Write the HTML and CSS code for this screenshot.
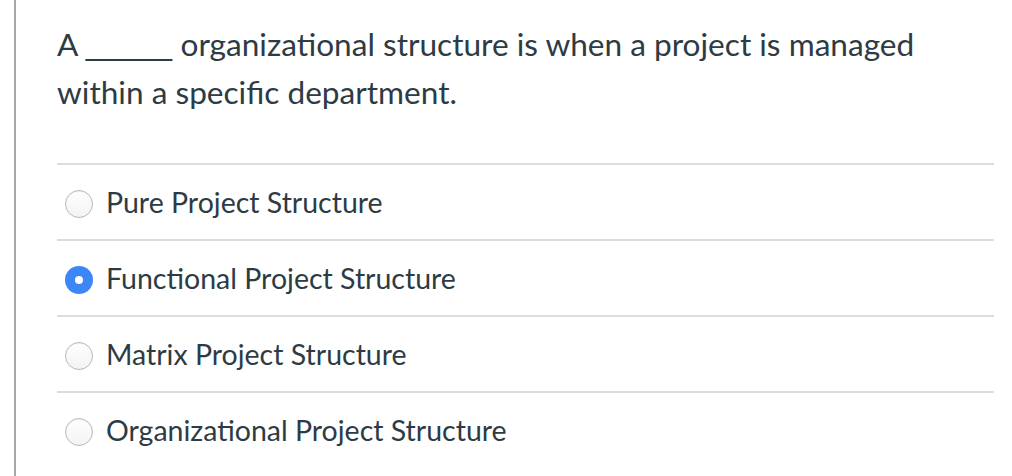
FILE: index.html
```html
<!DOCTYPE html>
<html>
<head>
<meta charset="utf-8">
<link rel="stylesheet" href="styles.css">
</head>
<body>
<div class="page">
  <div class="question">
    <p class="q-text">A <span class="blank">______</span> organizational structure is when a project is managed within a specific department.</p>
    <div class="answers">
      <div class="answer"><span class="radio"></span><span class="label">Pure Project Structure</span></div>
      <div class="answer"><span class="radio checked"></span><span class="label">Functional Project Structure</span></div>
      <div class="answer"><span class="radio"></span><span class="label">Matrix Project Structure</span></div>
      <div class="answer"><span class="radio"></span><span class="label">Organizational Project Structure</span></div>
    </div>
  </div>
</div>
</body>
</html>
```
FILE: styles.css
```css
html, body {
  margin: 0;
  padding: 0;
  background: #ffffff;
}
body {
  font-family: Lato, "Open Sans", sans-serif;
  color: #2d3b45;
}
.page {
  margin-left: 14px;
  border-left: 2px solid #a8a8a8;
  height: 476px;
  overflow: hidden;
  padding: 20px 18px 0 41px;
}
.q-text {
  margin: 0;
  font-size: 31.6px;
  line-height: 48px;
}
.blank {
  color: transparent;
  text-decoration: underline;
  text-decoration-color: #2d3b45;
  text-decoration-thickness: 2px;
  text-underline-offset: 3px;
  text-decoration-skip-ink: none;
}
.answers {
  margin-top: 47px;
}
.answer {
  display: flex;
  align-items: center;
  border-top: 2px solid #dcdcdc;
  height: 74px;
  padding-left: 8px;
}
.radio {
  width: 28px;
  height: 28px;
  border-radius: 50%;
  box-sizing: border-box;
  border: 1px solid #b9b9b9;
  background: linear-gradient(#ffffff, #f3f3f3);
  box-shadow: inset 0 1px 1px rgba(0,0,0,0.06);
  flex: 0 0 auto;
  margin-right: 13px;
  margin-top: 3px;
  position: relative;
}
.radio.checked {
  border: none;
  background: #3c87f5;
  box-shadow: none;
}
.radio.checked::after {
  content: "";
  position: absolute;
  left: 10px;
  top: 10px;
  width: 8px;
  height: 8px;
  border-radius: 50%;
  background: #ffffff;
}
.label {
  font-size: 28.5px;
  margin-top: -1px;
}
```
